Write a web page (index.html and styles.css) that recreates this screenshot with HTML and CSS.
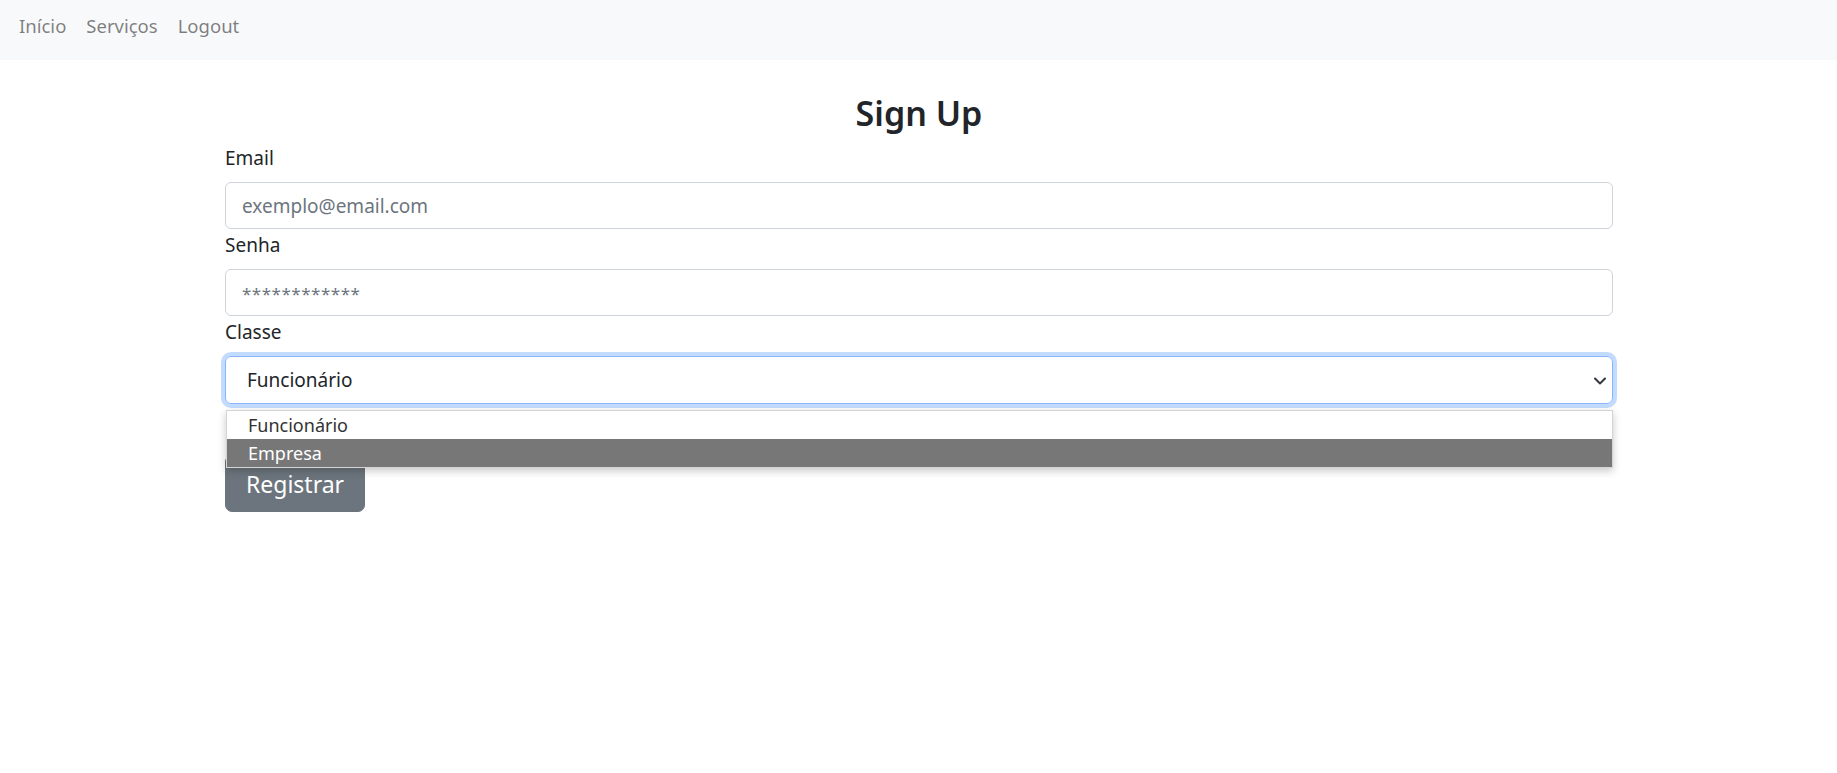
FILE: index.html
```html
<!DOCTYPE html>
<html lang="pt-BR">
<head>
  <meta charset="UTF-8" />
  <title>Sign Up</title>
  <link rel="stylesheet" href="styles.css">
</head>
<body>

<nav class="navbar">
  <a class="nav-link" href="#">Início</a>
  <a class="nav-link" href="#">Serviços</a>
  <a class="nav-link" href="#">Logout</a>
</nav>

<main class="container">
  <h3 class="title">Sign Up</h3>

  <form class="signup-form">
    <label class="form-label" for="email">Email</label>
    <input class="form-control" type="email" id="email" placeholder="exemplo@email.com" />

    <label class="form-label" for="senha">Senha</label>
    <input class="form-control" type="password" id="senha" placeholder="************" />

    <label class="form-label" for="classe">Classe</label>
    <div class="select-wrap">
      <div class="form-select" id="classe">
        <span>Funcionário</span>
        <svg class="chevron" width="12" height="8" viewBox="0 0 12 8">
          <path d="M1 1.5l5 5 5-5" fill="none" stroke="#343a40" stroke-width="2" stroke-linecap="round" stroke-linejoin="round"/>
        </svg>
      </div>
      <!-- lista aberta do select -->
      <ul class="select-menu">
        <li>Funcionário</li>
        <li class="active">Empresa</li>
      </ul>
    </div>

    <button class="btn-register" type="button">Registrar</button>
  </form>
</main>

</body>
</html>
```

FILE: styles.css
```css
body {
  margin: 0;
  font-family: "Noto Sans", "Open Sans", "Liberation Sans", sans-serif;
  font-size: 20px;
  color: #212529;
  background: #fff;
}

.navbar {
  display: flex;
  gap: 20px;
  height: 60px;
  padding: 0 19px;
  align-items: center;
  padding-bottom: 9px;
  box-sizing: border-box;
  background: #f8f9fa;
}
.nav-link {
  color: rgba(0, 0, 0, 0.5);
  text-decoration: none;
  font-size: 18.5px;
}

.container {
  width: 1388px;
  margin: 0 auto;
  padding-left: 1px;
}

.title {
  margin: 0;
  padding-top: 33px;
  height: 82px;
  box-sizing: border-box;
  text-align: center;
  font-size: 34px;
  font-weight: 600;
  line-height: 40px;
  color: #212529;
}

.signup-form {
  display: flex;
  flex-direction: column;
  align-items: flex-start;
}

.form-label {
  display: block;
  font-size: 19px;
  line-height: 28px;
  padding-top: 2px;
  margin-bottom: 10px;
}

.form-control {
  width: 100%;
  height: 47px;
  box-sizing: border-box;
  padding: 0 16px;
  font-family: inherit;
  font-size: 19px;
  color: #212529;
  border: 1px solid #ced4da;
  border-radius: 6px;
  outline: none;
}
.form-control::placeholder {
  color: #6c757d;
}
#senha::placeholder {
  font-size: 17px;
  letter-spacing: 0.5px;
}

.select-wrap {
  position: relative;
  width: 100%;
}
.form-select {
  display: flex;
  align-items: center;
  justify-content: space-between;
  height: 48px;
  box-sizing: border-box;
  padding: 0 6px 0 21px;
  font-size: 19px;
  color: #212529;
  border: 1px solid #86b7fe;
  border-radius: 6px;
  box-shadow: 0 0 0 4px rgba(13, 110, 253, 0.25);
}
.chevron {
  margin-top: 2px;
}

.select-menu {
  position: absolute;
  top: 54px;
  left: 1px;
  right: 0;
  margin: 0;
  padding: 0;
  list-style: none;
  background: #fff;
  border: 1px solid #d4d4d4;
  box-shadow: 0 3px 8px rgba(0, 0, 0, 0.22);
  font-size: 18px;
  z-index: 10;
}
.select-menu li {
  height: 28px;
  line-height: 28px;
  padding-left: 21px;
  color: #333;
}
.select-menu li.active {
  background: #777;
  color: #fff;
}

.btn-register {
  margin-top: 51px;
  height: 57px;
  padding: 0 20px;
  font-family: inherit;
  font-size: 23px;
  color: #fff;
  background: #6c757d;
  border: 1px solid #6c757d;
  border-radius: 7px;
  cursor: pointer;
}
```
